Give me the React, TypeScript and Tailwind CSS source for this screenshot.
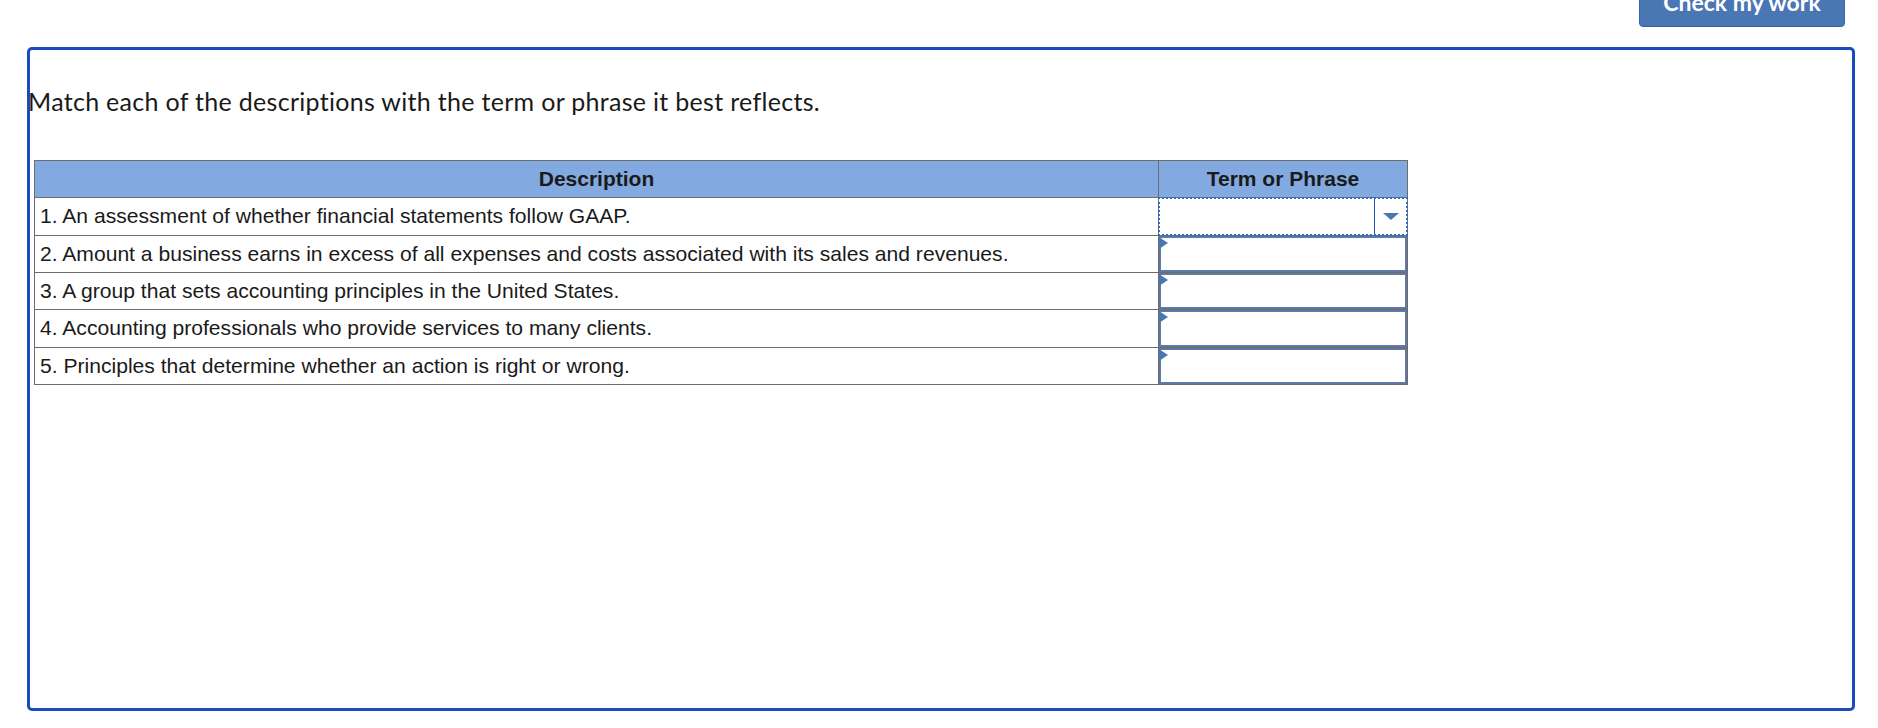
// App.tsx
const rows = [
  { text: "1. An assessment of whether financial statements follow GAAP.", height: "h-[38px]" },
  { text: "2. Amount a business earns in excess of all expenses and costs associated with its sales and revenues.", height: "h-[37px]" },
  { text: "3. A group that sets accounting principles in the United States.", height: "h-[37px]" },
  { text: "4. Accounting professionals who provide services to many clients.", height: "h-[38px]" },
  { text: "5. Principles that determine whether an action is right or wrong.", height: "h-[37px]" },
];

export default function App() {
  return (
    <div className="h-[728px] overflow-hidden bg-white font-['Liberation_Sans',sans-serif] text-[#1a1a1a]">
      <div className="flex justify-end pr-[33px]">
        <button className="-mt-[13px] h-[40px] w-[206px] rounded-[4px] border border-[#2f66b0] bg-[#4a76b4] pb-[11px] font-['Lato',sans-serif] text-[23px] leading-[28px] font-bold text-white">
          Check my work
        </button>
      </div>
      <div className="mt-[20px] mr-[23px] ml-[27px] h-[664px] rounded-[5px] border-[3px] border-[#1a4cc0]">
        <p className="-ml-[2px] pt-[33px] font-['Lato',sans-serif] text-[25px] leading-[36px] tracking-[0.3px] text-[#1a1a1a] [font-variant-ligatures:none]">
          Match each of the descriptions with the term or phrase it best reflects.
        </p>
        <table className="mt-[41px] ml-[4px] w-[1374px] table-fixed border-collapse text-[21px]">
          <thead>
            <tr className="h-[37px] bg-[#82aae0]">
              <th className="w-[1124px] border border-[#6d6d6d] font-bold">Description</th>
              <th className="border border-[#6d6d6d] font-bold">Term or Phrase</th>
            </tr>
          </thead>
          <tbody>
            {rows.map((row, i) => (
              <tr key={row.text} className={row.height}>
                <td className="border border-[#6d6d6d] px-[5px] pt-0 pb-[2px] text-[21.1px] leading-[23px]">{row.text}</td>
                <td className="relative border border-[#6d6d6d] p-0">
                  {i === 0 ? (
                    <div className="absolute -inset-px flex border-2 border-dotted border-[#2a6cc8]">
                      <div className="flex-1 border-r border-[#2458b0]" />
                      <div className="flex w-[31px] items-center justify-center">
                        <div className="h-0 w-0 border-x-[8px] border-t-[7px] border-x-transparent border-t-[#4a76b4]" />
                      </div>
                    </div>
                  ) : (
                    <div className="absolute inset-0 border border-[#6d7486]">
                      <div className="h-full border border-[#4f7fc4]" />
                      <div className="absolute top-0 -left-px h-0 w-0 border-y-[6px] border-l-[9px] border-y-transparent border-l-[#4a76b4]" />
                    </div>
                  )}
                </td>
              </tr>
            ))}
          </tbody>
        </table>
      </div>
    </div>
  );
}
